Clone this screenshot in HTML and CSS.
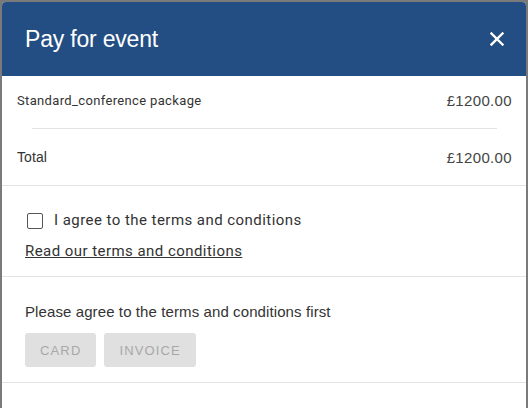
FILE: index.html
```html
<!DOCTYPE html>
<html>
<head>
<meta charset="utf-8">
<link rel="stylesheet" href="styles.css">
</head>
<body>
<div class="dialog">
  <div class="header">
    <h1 class="title">Pay for event</h1>
    <button class="close" aria-label="Close">
      <svg width="14" height="14" viewBox="0 0 14 14"><path d="M1.5 1.5L12.5 12.5M12.5 1.5L1.5 12.5" stroke="#fff" stroke-width="2.4" stroke-linecap="square"/></svg>
    </button>
  </div>
  <div class="items">
    <div class="row first">
      <span class="name">Standard_conference package</span>
      <span class="price">£1200.00</span>
    </div>
    <hr class="inner">
    <div class="row total">
      <span class="name big">Total</span>
      <span class="price">£1200.00</span>
    </div>
  </div>
  <div class="terms">
    <label class="agree"><span class="box"></span><span>I agree to the terms and conditions</span></label>
    <a class="link" href="#">Read our terms and conditions</a>
  </div>
  <div class="pay">
    <p class="note">Please agree to the terms and conditions first</p>
    <div class="buttons">
      <button class="btn">CARD</button>
      <button class="btn">INVOICE</button>
    </div>
  </div>
</div>
</body>
</html>
```
FILE: styles.css
```css
html, body { margin: 0; padding: 0; }
* { box-sizing: border-box; }
body { background: #7a7a7a; width: 528px; height: 408px; overflow: hidden; padding: 2px 2px 0; }
.dialog { background: #fff; border-radius: 4px 4px 0 0; height: 406px; overflow: hidden; font-family: "Liberation Sans", Arial, sans-serif; }
.header { background: #234e83; height: 74px; display: flex; align-items: center; justify-content: space-between; padding: 0 22px 0 23px; }
.title { margin: 0; color: #fff; font-weight: 400; font-size: 23px; letter-spacing: -0.2px; }
.close { background: none; border: 0; padding: 0; width: 14px; height: 14px; display: block; }
.close svg { display: block; }
.items { padding: 0 14px 0 15px; border-bottom: 1px solid #e3e3e3; height: 110px; }
.row { display: flex; justify-content: space-between; align-items: center; color: #333; }
.row.first { height: 52px; padding-bottom: 4px; }
.row.total { height: 56px; }
.name { font-family: Roboto, "Liberation Sans", sans-serif; font-size: 13px; letter-spacing: 0.35px; color: #333; }
.name.big { font-family: "Liberation Sans", Arial, sans-serif; font-size: 14px; letter-spacing: 0.1px; }
.price { font-size: 15px; letter-spacing: 0.35px; color: #444; }
.inner { margin: 0 15px; border: 0; border-top: 1px solid #e3e3e3; height: 0; }
.terms { padding: 24px 23px 0; height: 91px; border-bottom: 1px solid #e3e3e3; }
.agree { display: flex; align-items: center; font-family: Roboto, "Liberation Sans", sans-serif; font-size: 15px; letter-spacing: 0.45px; color: #333; height: 20px; }
.box { width: 16px; height: 16px; border: 1px solid #555; border-radius: 2px; margin: 2px 11px 0 2px; background: #fff; flex: none; }
.link { display: block; margin-top: 12px; font-family: Roboto, "Liberation Sans", sans-serif; font-size: 15px; letter-spacing: 0.45px; color: #333; text-decoration: underline; }
.pay { padding: 25px 23px 0; height: 106px; border-bottom: 1px solid #e3e3e3; }
.note { margin: 0; font-size: 15px; letter-spacing: 0.1px; color: #333; line-height: 20px; }
.buttons { display: flex; gap: 8px; margin-top: 11px; }
.btn { background: #e0e0e0; border: 0; border-radius: 3px; height: 34px; padding: 0 15px; color: #a8a8a8; font-family: "Liberation Sans", Arial, sans-serif; font-size: 13px; letter-spacing: 1.15px; }
```
